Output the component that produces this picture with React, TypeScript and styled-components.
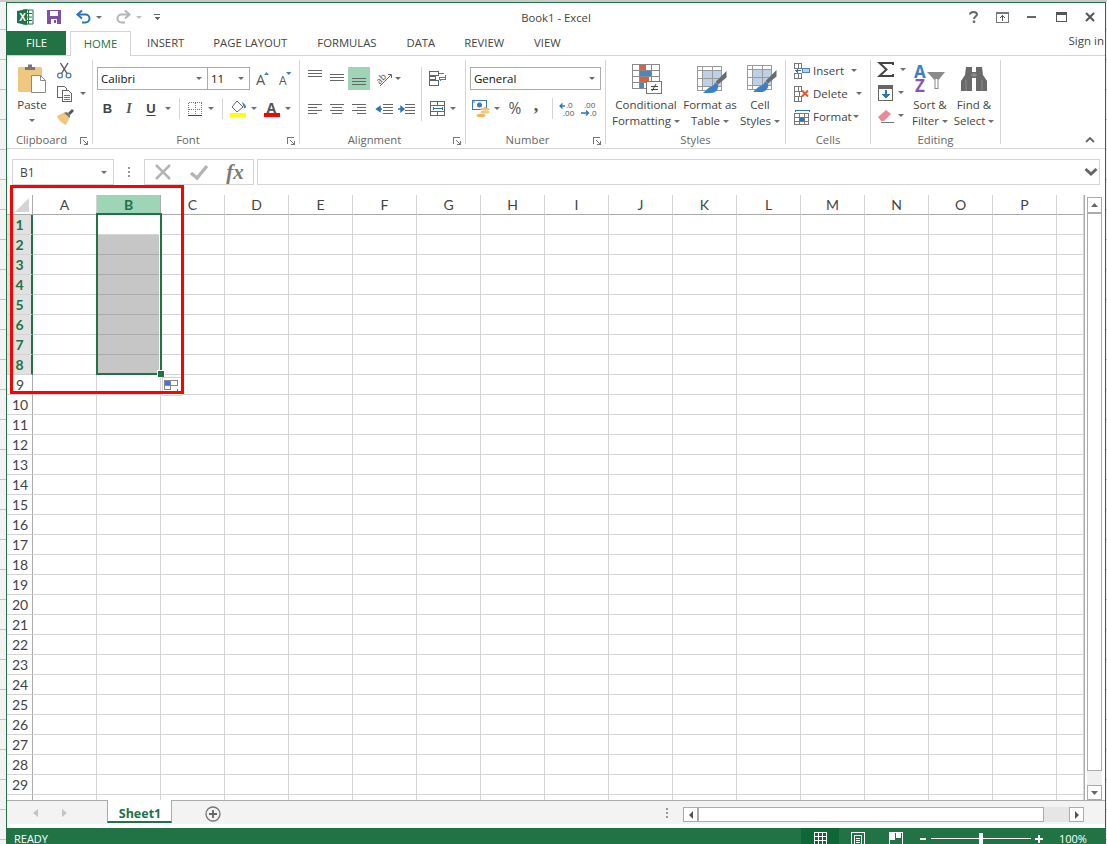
import React from "react";
import styled, { createGlobalStyle } from "styled-components";

const UI = `"Open Sans", "Noto Sans", sans-serif`;
const GREEN = "#217346";
const LINE = "#d4d4d4";
const EDGE = "#ababab";
const INK = "#444444";

const Global = createGlobalStyle`
  * { box-sizing: border-box; }
  html, body { margin: 0; padding: 0; background: #f1f1f1; }
`;

const Page = styled.div`
  position: relative;
  width: 1107px;
  height: 844px;
  padding: 2px 1px 0 6px;
  overflow: hidden;
  font-family: ${UI};
  font-size: 11.5px;
  color: ${INK};
  background:
    linear-gradient(#c9c9c9, #c9c9c9) 0 0 / 100% 2px no-repeat,
    repeating-linear-gradient(#f3f3f3 0 29px, #c4c4c4 29px 30px);
`;

const Window = styled.div`
  display: flex;
  flex-direction: column;
  width: 1100px;
  height: 842px;
  border: 1px solid ${GREEN};
  border-bottom: 0;
  background: #fff;
  overflow: hidden;
`;

const TitleBar = styled.header`
  display: grid;
  grid-template-columns: 1fr auto 1fr;
  align-items: center;
  height: 28px;
  flex: none;
`;

const QuickAccess = styled.div`
  display: flex;
  align-items: center;
  padding-left: 10px;
`;

const Title = styled.div`
  font-size: 11.3px;
  color: #444;
`;

const WindowControls = styled.div`
  display: flex;
  justify-content: flex-end;
  align-items: center;
`;

const Slot = styled.span<{ $w: number; $ml?: number; $h?: number }>`
  display: flex;
  align-items: center;
  justify-content: center;
  flex: none;
  width: ${(p) => p.$w}px;
  margin-left: ${(p) => p.$ml ?? 0}px;
  height: ${(p) => p.$h ?? 23}px;
`;

const AlignSlot = styled.span<{ $top: number; $on?: boolean }>`
  display: flex;
  align-items: flex-start;
  justify-content: center;
  flex: none;
  width: 22px;
  height: 23px;
  padding-top: ${(p) => p.$top}px;
  background: ${(p) => (p.$on ? "#9fd5b7" : "transparent")};
`;

const Caret = styled.i<{ $ml?: number; $c?: string }>`
  display: inline-block;
  flex: none;
  width: 0;
  height: 0;
  margin-left: ${(p) => p.$ml ?? 0}px;
  vertical-align: middle;
  border-left: 3px solid transparent;
  border-right: 3px solid transparent;
  border-top: 3px solid ${(p) => p.$c ?? "#6e6e6e"};
`;

const TabStrip = styled.nav`
  display: flex;
  flex: none;
  height: 25px;
  border-bottom: 1px solid ${LINE};
  font-size: 11.3px;
`;

const FileTab = styled.div`
  width: 59px;
  height: 24px;
  margin-right: 4px;
  background: ${GREEN};
  color: #fff;
  text-align: center;
  line-height: 23px;
`;

const HomeTab = styled.div`
  width: 61px;
  height: 25px;
  margin-right: 1px;
  border: 1px solid ${LINE};
  border-bottom: 0;
  background: #fff;
  color: ${GREEN};
  text-align: center;
  line-height: 23px;
`;

const Tab = styled.div<{ $pr?: number }>`
  padding: 0 ${(p) => p.$pr ?? 15}px 0 15px;
  line-height: 24px;
  color: #444;
  white-space: nowrap;
`;

const SignIn = styled.div`
  margin-left: auto;
  padding-right: 1px;
  line-height: 18px;
  margin-top: 1px;
  font-size: 11.5px;
  color: #444;
`;

const Ribbon = styled.section`
  display: flex;
  flex: none;
  height: 93px;
  padding-top: 4px;
  border-bottom: 1px solid ${LINE};
`;

const Group = styled.div<{ $w: number }>`
  display: flex;
  flex-direction: column;
  flex: none;
  width: ${(p) => p.$w}px;
  height: 84px;
  border-right: 1px solid ${LINE};
`;

const GroupBody = styled.div<{ $top?: number; $left?: number }>`
  display: flex;
  height: 74px;
  padding-top: ${(p) => p.$top ?? 0}px;
  padding-left: ${(p) => p.$left ?? 0}px;
`;

const GroupFooter = styled.div<{ $launch?: boolean }>`
  display: grid;
  grid-template-columns: minmax(0, 1fr) ${(p) => (p.$launch ? "16px" : "0")};
  height: 10px;
  line-height: 12px;
  color: #666;
  font-size: 11.3px;
  text-align: center;
  white-space: nowrap;
`;

const Launcher = styled.svg`
  justify-self: center;
  margin-top: 3px;
`;

const Stack = styled.div<{ $gap?: number; $mt?: number; $w?: number }>`
  display: flex;
  flex-direction: column;
  flex: none;
  gap: ${(p) => p.$gap ?? 7}px;
  margin-top: ${(p) => p.$mt ?? 0}px;
  ${(p) => (p.$w ? `width: ${p.$w}px;` : "")}
`;

const Row = styled.div`
  display: flex;
  align-items: center;
  height: 23px;
`;

const VSep = styled.span<{ $w: number; $h?: number }>`
  display: block;
  flex: none;
  width: ${(p) => p.$w}px;
  height: ${(p) => p.$h ?? 21}px;
  background: linear-gradient(${LINE}, ${LINE}) center / 1px 100% no-repeat;
`;

const Combo = styled.div<{ $w: number; $lead?: boolean }>`
  display: flex;
  align-items: center;
  justify-content: space-between;
  flex: none;
  width: ${(p) => p.$w}px;
  height: 23px;
  padding: 0 5px 0 3px;
  border: 1px solid ${EDGE};
  margin-left: ${(p) => (p.$lead ? "-1px" : 0)};
  color: #111;
  font-size: 11.5px;
  background: #fff;
`;

const PasteButton = styled.div`
  display: flex;
  flex-direction: column;
  align-items: center;
  width: 50px;
  padding-top: 4px;
`;

const PasteLabel = styled.div`
  margin-top: 4px;
  line-height: 16px;
`;

const PasteCaret = styled.div`
  line-height: 8px;
  margin-top: 3px;
`;

const BigButton = styled.div<{ $w: number }>`
  display: flex;
  flex-direction: column;
  align-items: center;
  flex: none;
  width: ${(p) => p.$w}px;
  text-align: center;
  white-space: nowrap;
`;

const BigIcon = styled.div<{ $pl?: number; $pt?: number }>`
  display: flex;
  align-items: center;
  justify-content: center;
  height: 37px;
  padding-left: ${(p) => p.$pl ?? 0}px;
  padding-top: ${(p) => p.$pt ?? 0}px;
`;

const BigLabel = styled.div`
  line-height: 16px;
`;

const Bold = styled.b`
  font-family: "Liberation Sans", sans-serif;
  font-size: 13px;
  color: #444;
`;

const Italic = styled.i`
  font-family: "Liberation Serif", serif;
  font-size: 14px;
  font-weight: 700;
  color: #555;
`;

const Under = styled.b`
  font-family: "Liberation Sans", sans-serif;
  font-size: 13px;
  color: #444;
  text-decoration: underline;
  text-underline-offset: 2px;
`;

const Percent = styled.span`
  font-size: 15.5px;
  line-height: 20px;
  margin-top: -2px;
  color: #555;
`;

const Comma = styled.b`
  font-family: "Liberation Serif", serif;
  font-size: 18px;
  line-height: 12px;
  color: #555;
  margin-top: -7px;
`;

const CellRow = styled.div`
  display: flex;
  align-items: center;
  height: 23px;
  white-space: nowrap;
`;

const CellIcon = styled.span`
  display: flex;
  width: 19px;
`;

const Collapse = styled.svg`
  margin-left: auto;
  margin-right: 10px;
  margin-top: 77px;
`;

const FormulaBar = styled.div`
  display: flex;
  align-items: flex-start;
  flex: none;
  height: 46px;
  padding: 10px 0 0 5px;
`;

const NameBox = styled.div`
  display: flex;
  align-items: center;
  justify-content: space-between;
  width: 102px;
  height: 26px;
  padding: 0 6px 0 7px;
  border: 1px solid ${LINE};
  font-size: 12px;
`;

const Dots = styled.span`
  display: flex;
  flex-direction: column;
  justify-content: center;
  align-items: center;
  gap: 2px;
  width: 30px;
  height: 26px;
`;

const Dot = styled.i`
  width: 2px;
  height: 2px;
  background: #999;
`;

const FxBox = styled.div`
  display: flex;
  align-items: center;
  width: 110px;
  height: 26px;
  margin-right: 3px;
  border: 1px solid ${LINE};
`;

const FxText = styled.i`
  font-family: "Liberation Serif", serif;
  font-size: 21px;
  font-weight: 700;
  color: #7a7a7a;
  line-height: 20px;
`;

const FormulaInput = styled.div`
  display: flex;
  align-items: center;
  justify-content: flex-end;
  width: 843px;
  height: 26px;
  padding-right: 1px;
  border: 1px solid ${LINE};
`;

const SheetArea = styled.div`
  display: flex;
  flex: none;
  height: 606px;
  border-bottom: 1px solid ${EDGE};
  overflow: hidden;
`;

const Grid = styled.div`
  position: relative;
  flex: none;
  width: 1078px;
  border-right: 1px solid ${EDGE};
`;

const GridRow = styled.div`
  display: flex;
  height: 20px;
`;

const Corner = styled.div`
  display: flex;
  align-items: flex-end;
  justify-content: flex-end;
  flex: none;
  width: 26px;
  padding: 0 3px 2px 0;
  border-bottom: 1px solid ${EDGE};
  border-right: 1px solid ${EDGE};
`;

const ColHead = styled.div<{ $on?: boolean; $w?: number }>`
  flex: none;
  width: ${(p) => p.$w ?? 64}px;
  height: 20px;
  text-align: center;
  font-family: Lato, sans-serif;
  font-size: 14px;
  line-height: 19px;
  color: ${(p) => (p.$on ? GREEN : "#444")};
  font-weight: ${(p) => (p.$on ? 700 : 400)};
  background: ${(p) => (p.$on ? "#9fd5b7" : "#fff")};
  border-right: 1px solid ${(p) => (p.$on ? EDGE : LINE)};
  border-bottom: 1px solid ${EDGE};
`;

const RowHead = styled.div<{ $on?: boolean }>`
  flex: none;
  width: 26px;
  height: 20px;
  text-align: center;
  font-family: Lato, sans-serif;
  font-size: 14px;
  line-height: 19px;
  padding-left: 1px;
  color: ${(p) => (p.$on ? GREEN : "#444")};
  font-weight: ${(p) => (p.$on ? 700 : 400)};
  background: ${(p) => (p.$on ? "#e1e1e1" : "#fff")};
  border-right: ${(p) => (p.$on ? `2px solid ${GREEN}` : `1px solid ${EDGE}`)};
  border-bottom: 1px solid ${LINE};
`;

const Cell = styled.div<{ $fill?: boolean; $w?: number }>`
  flex: none;
  width: ${(p) => p.$w ?? 64}px;
  height: 20px;
  background: ${(p) => (p.$fill ? "#c6c6c6" : "#fff")};
  border-right: 1px solid ${(p) => (p.$fill ? "#c6c6c6" : LINE)};
  border-bottom: 1px solid ${(p) => (p.$fill ? EDGE : LINE)};
`;

const Selection = styled.div`
  position: absolute;
  left: 89px;
  top: 18px;
  width: 66px;
  height: 162px;
  border: 2px solid ${GREEN};
  box-shadow: inset -1px 0 0 #fff;
`;

const Handle = styled.div`
  position: absolute;
  right: -4px;
  bottom: -4px;
  width: 6px;
  height: 6px;
  background: ${GREEN};
  border: 1px solid #fff;
  box-sizing: content-box;
  margin: -1px;
`;

const SmartTag = styled.div`
  position: absolute;
  left: 155px;
  top: 182px;
  display: flex;
  align-items: center;
  justify-content: center;
  width: 20px;
  height: 19px;
  background: #fff;
  border: 1px solid ${LINE};
`;

const VScroll = styled.div`
  display: flex;
  flex-direction: column;
  flex: none;
  width: 15px;
  margin-left: 2px;
  padding-top: 2px;
  background: linear-gradient(#fff 2px, #f0f0f0 2px);
`;

const ScrollBtn = styled.div<{ $h: number; $w: number }>`
  display: flex;
  align-items: center;
  justify-content: center;
  flex: none;
  width: ${(p) => p.$w}px;
  height: ${(p) => p.$h}px;
  background: #fff;
  border: 1px solid ${EDGE};
`;

const VThumb = styled.div`
  height: 559px;
  flex: none;
  background: #fff;
  border: 1px solid ${EDGE};
  border-top-width: 2px;
  margin-top: -1px;
`;

const VTrack = styled.div`
  flex: 1;
`;

const SheetBar = styled.div`
  display: flex;
  flex: none;
  height: 27px;
  background: #f3f3f3;
  border-bottom: 4px solid #fff;
`;

const SheetNav = styled.div`
  display: flex;
  align-items: center;
  width: 100px;
  padding-left: 26px;
  gap: 24px;
`;

const SheetTab = styled.div`
  width: 65px;
  height: 23px;
  margin-top: -1px;
  background: #fff;
  border: 1px solid ${EDGE};
  border-top: 0;
  border-bottom: 2px solid ${GREEN};
  color: ${GREEN};
  font-weight: 700;
  font-size: 12.5px;
  line-height: 27px;
  padding-left: 1px;
  text-align: center;
`;

const AddSheet = styled.div`
  display: flex;
  align-items: center;
  margin-left: 33px;
  margin-top: 2px;
`;

const ScrollGrip = styled.div`
  display: flex;
  flex-direction: column;
  justify-content: center;
  align-items: center;
  gap: 2px;
  margin-left: auto;
  width: 16px;
  margin-right: 8px;
`;

const HScroll = styled.div`
  display: flex;
  width: 401px;
  height: 15px;
  margin-top: 6px;
  margin-right: 21px;
  background: #e6e6e6;
`;

const HThumb = styled.div`
  width: 347px;
  flex: none;
  background: #fff;
  border: 1px solid ${EDGE};
  border-left-width: 2px;
  margin-left: -1px;
`;

const HTrack = styled.div`
  flex: 1;
`;

const StatusBar = styled.footer`
  display: flex;
  flex: none;
  height: 16px;
  background: ${GREEN};
  color: #fff;
  font-size: 11px;
  line-height: 15px;
  padding: 0 20px 0 7px;
  overflow: hidden;
`;

const ReadyLabel = styled.div`
  margin-top: 3px;
`;

const StatusRight = styled.div`
  display: flex;
  margin-left: auto;
`;

const ViewBtn = styled.div<{ $on?: boolean }>`
  display: flex;
  justify-content: center;
  align-items: flex-start;
  padding-top: 4px;
  width: 38px;
  height: 16px;
  background: ${(p) => (p.$on ? "#0f6738" : "transparent")};
`;

const ZoomSign = styled.div`
  display: flex;
  justify-content: center;
  align-items: center;
  width: 16px;
  height: 8px;
  margin-top: 7px;
`;

const ZoomTrack = styled.div`
  position: relative;
  width: 100px;
  height: 1px;
  margin-top: 10px;
  background: #fff;
`;

const ZoomKnob = styled.div`
  position: absolute;
  left: 48px;
  top: -5px;
  width: 4px;
  height: 14px;
  background: #fff;
`;

const ZoomPct = styled.div`
  width: 26px;
  margin: 3px 0 0 12px;
  text-align: right;
  white-space: nowrap;
`;

const Marker = styled.div`
  position: absolute;
  left: 10px;
  top: 185px;
  width: 174px;
  height: 209px;
  border: 3px solid #ff0000;
  pointer-events: none;
`;

type SP = React.SVGProps<SVGSVGElement> & { w: number; h: number };
const S = ({ w, h, children, ...r }: SP) => (
  <svg width={w} height={h} viewBox={`0 0 ${w} ${h}`} overflow="visible" style={{ display: "block", flex: "none" }} {...r}>
    {children}
  </svg>
);

const Lines = ({ w, ys, spans, c = "#666" }: { w: number; ys: number[]; spans?: [number, number][]; c?: string }) => (
  <S w={w} h={Math.max(...ys) + 1} shapeRendering="crispEdges">
    {ys.map((y, i) => {
      const sp = spans?.[i] ?? [0, w];
      return <line key={y} x1={sp[0]} x2={sp[1]} y1={y + 0.5} y2={y + 0.5} stroke={c} />;
    })}
  </S>
);

const ExcelLogo = () => (
  <S w={17} h={16}>
    <path d="M6 1h10v14H6z" fill="#fff" stroke={GREEN} />
    <path d="M9 4.5h6M9 8h6M9 11.5h6M11.5 1v14" stroke={GREEN} />
    <path d="M0 2l10-2v16L0 14z" fill={GREEN} />
    <text x="2.2" y="11.5" fontSize="10" fontWeight="700" fill="#fff" fontFamily="Liberation Sans">X</text>
  </S>
);

const SaveIcon = () => (
  <S w={14} h={14} shapeRendering="crispEdges">
    <path d="M0 0h14v14H0z" fill="#7d51a8" />
    <path d="M3 1h8v5H3z" fill="#fff" />
    <path d="M4 9h6v5H4z" fill="#fff" />
    <path d="M7 10h2v3H7z" fill="#7d51a8" />
  </S>
);

const UndoIcon = ({ c, flip }: { c: string; flip?: boolean }) => (
  <S w={15} h={14}>
    <g transform={flip ? "translate(15,0) scale(-1,1)" : undefined}>
      <path d="M1.5 4.5h8a4 4 0 0 1 0 8H6" fill="none" stroke={c} strokeWidth="2" />
      <path d="M6 0.5L1.5 4.5 6 8.5" fill="none" stroke={c} strokeWidth="2" />
    </g>
  </S>
);

const CustomizeIcon = () => (
  <S w={6} h={7} shapeRendering="crispEdges">
    <path d="M0 0h6v1H0z" fill="#666" />
    <path d="M0 3h6L3 6z" fill="#666" />
  </S>
);

const PasteIcon = () => (
  <S w={28} h={29}>
    <rect x="0" y="3" width="24" height="25" rx="1.5" fill="#edc87e" />
    <path d="M7 6V3h3V0.5h4V3h3v3z" fill="#777" />
    <path d="M13.5 11.5h9l5 5v12h-14z" fill="#fff" stroke="#8a8a8a" />
    <path d="M22.5 11.5v5h5" fill="none" stroke="#8a8a8a" />
  </S>
);

const CutIcon = () => (
  <S w={15} h={16}>
    <circle cx="3" cy="12.5" r="2.4" fill="none" stroke="#4a7ebb" strokeWidth="1.3" />
    <circle cx="11.5" cy="12.5" r="2.4" fill="none" stroke="#4a7ebb" strokeWidth="1.3" />
    <path d="M4.5 10.5L11 0M10 10.5L3.5 0" stroke="#555" strokeWidth="1.4" />
  </S>
);

const CopyIcon = () => (
  <S w={16} h={16} shapeRendering="crispEdges">
    <path d="M.5 .5h7l2 2v9h-9z" fill="#fff" stroke="#666" />
    <path d="M5.5 4.5h6l3 3v8h-9z" fill="#fff" stroke="#666" />
    <path d="M7 9h6M7 11h6M7 13h6" stroke="#4a7ebb" />
  </S>
);

const PainterIcon = () => (
  <S w={17} h={16}>
    <path d="M0 7L8 3l5 5-4 8c-3-1-8-5-9-9z" fill="#edc87e" />
    <path d="M7 4l3-1 3 3 0 3z" fill="#777" />
    <path d="M11 4l4-4 2 2-4 4z" fill="#555" />
  </S>
);

const SizeA = ({ up }: { up: boolean }) => (
  <S w={20} h={16}>
    <text x="4" y="14" fontSize={up ? 14.5 : 12} fill="#555" fontFamily="Open Sans">A</text>
    <path d={up ? "M12 4h5l-2.500-3z" : "M11 1h5.500l-2.750 3z"} fill="#4a7ebb" />
  </S>
);

const BordersIcon = () => (
  <S w={14} h={14} shapeRendering="crispEdges">
    <path d="M.5 .5h13M.5 .5v13M13.5 .5v13M7 .5v13M.5 7h13" stroke="#777" strokeDasharray="1 1" fill="none" />
    <path d="M0 13.5h14" stroke="#444" />
  </S>
);

const FillIcon = () => (
  <S w={17} h={17}>
    <path d="M7 1l6 6-6 5-5-5z" fill="#fff" stroke="#666" />
    <path d="M12 2c2 1 4 3 4 5 0 1-1 1.5-2 1z" fill="#4a7ebb" />
    <rect x="0" y="13" width="16" height="4" fill="#ffff00" />
  </S>
);

const FontColorIcon = () => (
  <S w={16} h={17}>
    <text x="2.5" y="12.5" fontSize="14" fontWeight="700" fill="#555" fontFamily="Open Sans">A</text>
    <rect x="0" y="13" width="16" height="4" fill="#ff0000" />
  </S>
);

const OrientIcon = () => (
  <S w={16} h={16}>
    <path d="M4 15L15 4M12 3.5h3.5V7" fill="none" stroke="#666" />
    <text x="0" y="11" fontSize="9" fill="#555" fontFamily="Open Sans" transform="rotate(-45 5 8)">ab</text>
  </S>
);

const WrapIcon = () => (
  <S w={17} h={15} shapeRendering="crispEdges">
    <path d="M.5 .5h9v4h-9zM.5 9.500h9v5h-9zM.5 5.500h6v3h-6z" fill="none" stroke="#666" />
    <path d="M10 2.500h5M10 6.500h6" stroke="#4a7ebb" />
    <path d="M16 4v4h-6M12 6l-2 2 2 2" fill="none" stroke="#4a7ebb" />
  </S>
);

const IndentIcon = ({ inc }: { inc?: boolean }) => (
  <S w={17} h={10}>
    <path d="M7 .5h10M7 3.500h10M7 6.500h10M7 9.500h10" stroke="#666" shapeRendering="crispEdges" />
    <path
      d={inc ? "M0 5h5M3 2.500L6 5l-3 2.500z" : "M6 5H1M4 2.500L0.500 5 4 7.500z"}
      stroke="#2e75b6"
      fill="#2e75b6"
      strokeWidth="1.400"
    />
  </S>
);

const MergeIcon = () => (
  <S w={15} h={15} shapeRendering="crispEdges">
    <path d="M.5 .5h14v14H.5zM.5 4.500h14M.5 10.500h14M7.500 .5v4M7.500 10.500v4" fill="none" stroke="#666" />
    <path d="M3 7.500h9" stroke="#2e75b6" />
    <path d="M3 6v3M12 6v3" stroke="#2e75b6" />
  </S>
);

const AccountingIcon = () => (
  <S w={18} h={18}>
    <rect x="0.500" y="0.500" width="14" height="9" fill="#fff" stroke="#3a78b8" />
    <circle cx="7.500" cy="5" r="2.500" fill="#3a78b8" />
    <path d="M1 2h2M12 8h2" stroke="#3a78b8" />
    <ellipse cx="13" cy="9" rx="4.500" ry="1.600" fill="#f0c36d" />
    <ellipse cx="13" cy="12" rx="4.500" ry="1.600" fill="#edc87e" />
    <ellipse cx="9" cy="15.500" rx="4.500" ry="1.800" fill="#f2b55e" />
  </S>
);

const DecimalIcon = ({ inc }: { inc?: boolean }) => (
  <S w={17} h={16}>
    <text x={inc ? 6 : 3} y="6.500" fontSize="8" fill="#555" fontFamily="Open Sans">{inc ? ".0" : ".00"}</text>
    <text x={inc ? 3 : 9} y="15" fontSize="8" fill="#555" fontFamily="Open Sans">{inc ? ".00" : ".0"}</text>
    <path
      d={inc ? "M0 5h5M2.500 2.500L0 5l2.500 2.500" : "M0 12h7M5 9.500L7.500 12 5 14.500"}
      fill="none"
      stroke="#2e75b6"
      strokeWidth="1.300"
    />
  </S>
);

const CondIcon = () => (
  <S w={30} h={30} shapeRendering="crispEdges">
    <path d="M.5 .5h27v24h-27zM.5 6.500h27M.5 12.500h27M.5 18.500h27M7.500 .5v24M19.500 .5v24" fill="#fff" stroke="#8a8a8a" />
    <path d="M8 1h6v5H8z" fill="#d9623b" />
    <path d="M8 7h11v5H8z" fill="#4a86c5" />
    <path d="M8 13h9v5H8z" fill="#d9623b" />
    <path d="M8 19h4v5H8z" fill="#4a86c5" />
    <path d="M14.500 17.500h15v12h-15z" fill="#fff" stroke="#777" />
    <path d="M18.500 22h7M18.500 25h7" stroke="#444" />
    <path d="M24 20L20 27" stroke="#444" shapeRendering="auto" />
  </S>
);

const TableIcon = () => (
  <S w={30} h={28}>
    <g shapeRendering="crispEdges">
      <path d="M.5 .5h24v24H.5z" fill="#fff" stroke="#9a9a9a" />
      <path d="M6 5h18v15H6z" fill="#bcd1e8" />
      <path d="M.5 4.500h24M.5 12.500h24M.5 20.500h24M5.500 .5v24M15.500 .5v24" stroke="#9a9a9a" fill="none" />
    </g>
    <path d="M29.500 5l-11 11 2.500 2.500 8.500-7z" fill="#6b6b6b" />
    <path d="M18 16.500c-1 3-3 4-6 5l-6 5.500h8c5 0 8-4 7-8.500z" fill="#3b7fc4" />
  </S>
);

const InsertIcon = () => (
  <S w={16} h={16} shapeRendering="crispEdges">
    <path d="M.5 .5h7v5h-7zM.5 10.500h7v5h-7zM4 .5v5M4 10.500v5" fill="#fff" stroke="#777" />
    <path d="M8 5.500h7v4H8z" fill="#b8cfe6" stroke="#4a86c5" />
    <path d="M1 7.500h6M3 5.500v4M2 6.500v2" stroke="#2e75b6" />
  </S>
);

const DeleteIcon = () => (
  <S w={16} h={16}>
    <path d="M.5 .5h7v5h-7zM.5 10.500h7v5h-7zM4 .5v5M4 10.500v5M.5 5.500h5v5h-5z" fill="#fff" stroke="#777" shapeRendering="crispEdges" />
    <path d="M8 4.500l6 6M14 4.500l-6 6" stroke="#dc5a32" strokeWidth="2" />
  </S>
);

const FormatIcon = () => (
  <S w={16} h={16} shapeRendering="crispEdges">
    <path d="M1 1.500h14M1 .5v2M15 .5v2" stroke="#2e75b6" />
    <path d="M.5 4.500h14v11H.5zM.5 8.500h14M.5 12.500h14M5.500 4.500v11M10.500 4.500v11" fill="#fff" stroke="#777" />
    <path d="M6 9h4v3H6z" fill="#2e75b6" />
  </S>
);

const SumIcon = () => (
  <S w={16} h={15}>
    <path d="M15 3V1H1.500l7 6.500-7 6.500H15v-2" fill="none" stroke="#444" strokeWidth="2" />
  </S>
);

const FillDownIcon = () => (
  <S w={15} h={16} shapeRendering="crispEdges">
    <path d="M.5 .5h14v15H.5z" fill="#fff" stroke="#666" />
    <path d="M1 1h13v3H1z" fill="#666" />
    <path d="M7 5h2v6H7z" fill="#2e75b6" />
    <path d="M4 9h8v1h-1v1h-1v1H9v1H7v-1H6v-1H5v-1H4z" fill="#2e75b6" />
  </S>
);

const ClearIcon = () => (
  <S w={16} h={14}>
    <path d="M0 8l8-7 5 4-7 7H3z" fill="#ea8a94" />
    <path d="M3 13.500h13" stroke="#777" />
  </S>
);

const SortIcon = () => (
  <S w={32} h={29}>
    <text x="0" y="14" fontSize="17" fontWeight="700" fill="#3b7fc4" fontFamily="Open Sans">A</text>
    <text x="1" y="28" fontSize="17" fontWeight="700" fill="#8a56b5" fontFamily="Open Sans">Z</text>
    <path d="M13 8h18l-6.500 8v9h-4v-9z" fill="#8a8a8a" />
    <path d="M21.500 15h2v9h-2z" fill="#fff" />
  </S>
);

const FindIcon = () => (
  <S w={26} h={25}>
    <path d="M5 1h6v5h4V1h6l1 8 4 6v10H15V12h-4v13H0V15l4-6z" fill="#6a6a6a" />
    <path d="M11 8h4v2h-4zM5 14v11M21 14v11" stroke="#8d8d8d" fill="#888" />
  </S>
);

const Launch = () => (
  <Launcher width="8" height="8" viewBox="0 0 8 8" shapeRendering="crispEdges">
    <path d="M.5 7V.5H7" fill="none" stroke="#777" />
    <path d="M3 3l4 4M4 7h3V4" fill="none" stroke="#777" />
  </Launcher>
);

const Foot = ({ label, launch }: { label: string; launch?: boolean }) => (
  <GroupFooter $launch={launch}>
    <span>{label}</span>
    {launch && <Launch />}
  </GroupFooter>
);

const columns = "ABCDEFGHIJKLMNOP".split("");
const rows = Array.from({ length: 30 }, (_, i) => i + 1);

export default function App() {
  return (
    <Page>
      <Global />
      <Window>
        <TitleBar>
          <QuickAccess>
            <ExcelLogo />
            <Slot $w={14} $ml={13}><SaveIcon /></Slot>
            <Slot $w={15} $ml={15}><UndoIcon c="#2e75b6" /></Slot>
            <Slot $w={15}><Caret /></Slot>
            <Slot $w={15} $ml={10}><UndoIcon c="#b5b5b5" flip /></Slot>
            <Slot $w={15}><Caret $c="#c0c0c0" /></Slot>
            <Slot $w={6} $ml={8}><CustomizeIcon /></Slot>
          </QuickAccess>
          <Title>Book1 - Excel</Title>
          <WindowControls>
            <Slot $w={14}>
              <S w={9} h={12}>
                <path d="M1 3.500C1 1.500 3 1 4.500 1S8 1.800 8 3.500 5 5.500 5 8" fill="none" stroke="#666" strokeWidth="2" />
                <rect x="3.800" y="9.500" width="2.400" height="2.400" fill="#666" />
              </S>
            </Slot>
            <Slot $w={14} $ml={15}>
              <S w={13} h={11} shapeRendering="crispEdges">
                <path d="M.5 .5h12v10H.5z" fill="none" stroke="#777" />
                <path d="M1 1.500h11" stroke="#777" />
                <path d="M6.500 9V4M4 6l2.500-2.500L9 6" fill="none" stroke="#555" />
              </S>
            </Slot>
            <Slot $w={10} $ml={17}>
              <S w={9} h={4}><rect y="1" width="9" height="2" fill="#666" /></S>
            </Slot>
            <Slot $w={10} $ml={20}>
              <S w={11} h={10} shapeRendering="crispEdges">
                <path d="M.5 .5h10v9H.5z" fill="none" stroke="#555" />
                <path d="M0 1.500h11" stroke="#555" strokeWidth="2" />
              </S>
            </Slot>
            <Slot $w={10} $ml={19}>
              <S w={10} h={10}><path d="M1 1l8 8M9 1l-8 8" stroke="#555" strokeWidth="2" /></S>
            </Slot>
            <Slot $w={10} />
          </WindowControls>
        </TitleBar>

        <TabStrip>
          <FileTab>FILE</FileTab>
          <HomeTab>HOME</HomeTab>
          <Tab $pr={14}>INSERT</Tab>
          <Tab>PAGE LAYOUT</Tab>
          <Tab>FORMULAS</Tab>
          <Tab $pr={14}>DATA</Tab>
          <Tab>REVIEW</Tab>
          <Tab>VIEW</Tab>
          <SignIn>Sign in</SignIn>
        </TabStrip>

        <Ribbon>
          <Group $w={86}>
            <GroupBody>
              <PasteButton>
                <PasteIcon />
                <PasteLabel>Paste</PasteLabel>
                <PasteCaret><Caret /></PasteCaret>
              </PasteButton>
              <Stack $gap={0} $mt={-1}>
                <Row><CutIcon /></Row>
                <Row><CopyIcon /><Caret $ml={7} /></Row>
                <Row><PainterIcon /></Row>
              </Stack>
            </GroupBody>
            <Foot label="Clipboard" launch />
          </Group>

          <Group $w={207}>
            <GroupBody $top={7} $left={4}>
              <Stack>
                <Row>
                  <Combo $w={111}>Calibri<Caret /></Combo>
                  <Combo $w={43} $lead>11<Caret /></Combo>
                  <Slot $w={24}><SizeA up /></Slot>
                  <Slot $w={22}><SizeA up={false} /></Slot>
                </Row>
                <Row>
                  <Slot $w={21}><Bold>B</Bold></Slot>
                  <Slot $w={22}><Italic>I</Italic></Slot>
                  <Slot $w={22}><Under>U</Under></Slot>
                  <Slot $w={12}><Caret /></Slot>
                  <VSep $w={10} />
                  <Slot $w={22}><BordersIcon /></Slot>
                  <Slot $w={10}><Caret /></Slot>
                  <VSep $w={12} />
                  <Slot $w={20}><FillIcon /></Slot>
                  <Slot $w={12}><Caret /></Slot>
                  <Slot $w={24}><FontColorIcon /></Slot>
                  <Slot $w={8}><Caret /></Slot>
                </Row>
              </Stack>
            </GroupBody>
            <Foot label="Font" launch />
          </Group>

          <Group $w={166}>
            <GroupBody $top={7} $left={4}>
              <Stack>
                <Row>
                  <AlignSlot $top={3}><Lines w={14} ys={[0, 3, 6]} /></AlignSlot>
                  <AlignSlot $top={7}><Lines w={14} ys={[0, 3, 6]} /></AlignSlot>
                  <AlignSlot $top={11} $on><Lines w={14} ys={[0, 3, 6]} /></AlignSlot>
                  <Slot $w={20} $ml={4}><OrientIcon /></Slot>
                  <Slot $w={8}><Caret /></Slot>
                </Row>
                <Row>
                  <Slot $w={22}><Lines w={14} ys={[0, 3, 6, 9]} spans={[[0, 14], [0, 9], [0, 14], [0, 9]]} /></Slot>
                  <Slot $w={22}><Lines w={14} ys={[0, 3, 6, 9]} spans={[[0, 14], [2, 12], [0, 14], [2, 12]]} /></Slot>
                  <Slot $w={22}><Lines w={14} ys={[0, 3, 6, 9]} spans={[[0, 14], [5, 14], [0, 14], [5, 14]]} /></Slot>
                  <Slot $w={20} $ml={4}><IndentIcon /></Slot>
                  <Slot $w={20} $ml={2}><IndentIcon inc /></Slot>
                </Row>
              </Stack>
              <VSep $w={11} $h={54} />
              <Stack>
                <Row><Slot $w={18} $ml={1}><WrapIcon /></Slot></Row>
                <Row>
                  <Slot $w={18} $ml={1}><MergeIcon /></Slot>
                  <Slot $w={14}><Caret /></Slot>
                </Row>
              </Stack>
            </GroupBody>
            <Foot label="Alignment" launch />
          </Group>

          <Group $w={140}>
            <GroupBody $top={7} $left={4}>
              <Stack>
                <Row><Combo $w={131}>General<Caret /></Combo></Row>
                <Row>
                  <Slot $w={18} $ml={2}><AccountingIcon /></Slot>
                  <Slot $w={14}><Caret /></Slot>
                  <Slot $w={22}><Percent>%</Percent></Slot>
                  <Slot $w={20}><Comma>,</Comma></Slot>
                  <VSep $w={12} />
                  <Slot $w={20}><DecimalIcon inc /></Slot>
                  <Slot $w={22}><DecimalIcon /></Slot>
                </Row>
              </Stack>
            </GroupBody>
            <Foot label="Number" launch />
          </Group>

          <Group $w={180}>
            <GroupBody $left={4}>
              <BigButton $w={72}>
                <BigIcon $pl={2}><CondIcon /></BigIcon>
                <BigLabel>Conditional<br />Formatting <Caret /></BigLabel>
              </BigButton>
              <BigButton $w={56}>
                <BigIcon $pl={4} $pt={3}><TableIcon /></BigIcon>
                <BigLabel>Format as<br />Table <Caret /></BigLabel>
              </BigButton>
              <BigButton $w={44}>
                <BigIcon $pl={3}><TableIcon /></BigIcon>
                <BigLabel>Cell<br />Styles <Caret /></BigLabel>
              </BigButton>
            </GroupBody>
            <Foot label="Styles" />
          </Group>

          <Group $w={85}>
            <GroupBody $left={8}>
              <Stack $gap={0} $mt={-1}>
                <CellRow><CellIcon><InsertIcon /></CellIcon>Insert<Caret $ml={7} /></CellRow>
                <CellRow><CellIcon><DeleteIcon /></CellIcon>Delete<Caret $ml={8} /></CellRow>
                <CellRow><CellIcon><FormatIcon /></CellIcon>Format<Caret $ml={1} /></CellRow>
              </Stack>
            </GroupBody>
            <Foot label="Cells" />
          </Group>

          <Group $w={130}>
            <GroupBody $left={7}>
              <Stack $gap={0} $mt={-2} $w={33}>
                <Row><SumIcon /><Caret $ml={6} /></Row>
                <Row><FillDownIcon /><Caret $ml={5} /></Row>
                <Row><ClearIcon /><Caret $ml={4} /></Row>
              </Stack>
              <BigButton $w={38}>
                <BigIcon><SortIcon /></BigIcon>
                <BigLabel>Sort &amp;<br />Filter <Caret /></BigLabel>
              </BigButton>
              <BigButton $w={50}>
                <BigIcon><FindIcon /></BigIcon>
                <BigLabel>Find &amp;<br />Select <Caret /></BigLabel>
              </BigButton>
            </GroupBody>
            <Foot label="Editing" />
          </Group>

          <Collapse width="10" height="6" viewBox="0 0 10 6">
            <path d="M1 5l4-4 4 4" fill="none" stroke="#666" strokeWidth="1.800" />
          </Collapse>
        </Ribbon>

        <FormulaBar>
          <NameBox>B1<Caret /></NameBox>
          <Dots><Dot /><Dot /><Dot /></Dots>
          <FxBox>
            <Slot $w={36} $h={24}>
              <S w={18} h={16}><path d="M2 1l14 14M16 1L2 15" stroke="#b5b5b5" strokeWidth="2.600" /></S>
            </Slot>
            <Slot $w={36} $h={24}>
              <S w={20} h={16}><path d="M2 9l6 5L18 2" fill="none" stroke="#b5b5b5" strokeWidth="3.400" /></S>
            </Slot>
            <Slot $w={36} $h={24}><FxText>fx</FxText></Slot>
          </FxBox>
          <FormulaInput>
            <S w={14} h={10}><path d="M1.500 2L7 7l5.500-5" fill="none" stroke="#666" strokeWidth="3" /></S>
          </FormulaInput>
        </FormulaBar>

        <SheetArea>
          <Grid>
            <GridRow>
              <Corner>
                <S w={14} h={14}><path d="M14 0v14H0z" fill="#d4d4d4" /></S>
              </Corner>
              {columns.map((c) => (
                <ColHead key={c} $on={c === "B"}>{c}</ColHead>
              ))}
              <ColHead $w={27} />
            </GridRow>
            {rows.map((r) => (
              <GridRow key={r}>
                <RowHead $on={r <= 8}>{r < 30 ? r : ""}</RowHead>
                {columns.map((c) => (
                  <Cell key={c} $fill={c === "B" && r >= 2 && r <= 8} />
                ))}
                <Cell $w={27} />
              </GridRow>
            ))}
            <Selection><Handle /></Selection>
            <SmartTag>
              <S w={16} h={13} shapeRendering="crispEdges">
                <path d="M.5 .5h6v5h-6z" fill="#3b78e7" stroke="#888" />
                <path d="M6.500 .5h7v5h-7zM.5 5.500h6v4h-6z" fill="#fff" stroke="#888" />
                <path d="M1 12h1M4 12h1M7 12h1M11 11.500h5M13.500 9v5" stroke="#777" />
              </S>
            </SmartTag>
          </Grid>
          <VScroll>
            <ScrollBtn $w={15} $h={16}>
              <S w={7} h={4}><path d="M0 4h7L3.500 0z" fill="#666" /></S>
            </ScrollBtn>
            <VThumb />
            <VTrack />
            <ScrollBtn $w={15} $h={15}>
              <S w={7} h={4}><path d="M0 0h7L3.500 4z" fill="#666" /></S>
            </ScrollBtn>
          </VScroll>
        </SheetArea>

        <SheetBar>
          <SheetNav>
            <S w={5} h={8}><path d="M5 0v8L0 4z" fill="#c4c4c4" /></S>
            <S w={5} h={8}><path d="M0 0v8l5-4z" fill="#c4c4c4" /></S>
          </SheetNav>
          <SheetTab>Sheet1</SheetTab>
          <AddSheet>
            <S w={16} h={16}>
              <circle cx="8" cy="8" r="7" fill="none" stroke="#777" strokeWidth="1.300" />
              <path d="M8 4v8M4 8h8" stroke="#666" strokeWidth="1.800" />
            </S>
          </AddSheet>
          <ScrollGrip><Dot /><Dot /><Dot /></ScrollGrip>
          <HScroll>
            <ScrollBtn $w={15} $h={15}>
              <S w={4} h={8}><path d="M4 0v8L0 4z" fill="#555" /></S>
            </ScrollBtn>
            <HThumb />
            <HTrack />
            <ScrollBtn $w={15} $h={15}>
              <S w={4} h={8}><path d="M0 0v8l4-4z" fill="#555" /></S>
            </ScrollBtn>
          </HScroll>
        </SheetBar>

        <StatusBar>
          <ReadyLabel>READY</ReadyLabel>
          <StatusRight>
            <ViewBtn $on>
              <S w={13} h={13} shapeRendering="crispEdges">
                <path d="M.5 .5h12v12.500H.5zM.5 4.500h12M.5 8.500h12M4.500 .5v13M8.500 .5v13" fill="none" stroke="#fff" />
              </S>
            </ViewBtn>
            <ViewBtn>
              <S w={14} h={13} shapeRendering="crispEdges">
                <path d="M.5 .5h13v13H.5z" fill="none" stroke="#fff" />
                <path d="M3.500 3.500h7v9h-7zM5 6h4M5 8h4M5 10h4" fill="none" stroke="#fff" />
              </S>
            </ViewBtn>
            <ViewBtn>
              <S w={14} h={13} shapeRendering="crispEdges">
                <path d="M.5 .5h13v13H.5z" fill="none" stroke="#fff" />
                <path d="M1 1h5v7H1zM7 1h5v5H7z" fill="#fff" />
              </S>
            </ViewBtn>
            <ZoomSign><S w={6} h={2}><rect width="6" height="2" fill="#fff" /></S></ZoomSign>
            <ZoomTrack><ZoomKnob /></ZoomTrack>
            <ZoomSign>
              <S w={8} h={8}><path d="M4 0v8M0 4h8" stroke="#fff" strokeWidth="2" /></S>
            </ZoomSign>
            <ZoomPct>100%</ZoomPct>
          </StatusRight>
        </StatusBar>
      </Window>
      <Marker />
    </Page>
  );
}
